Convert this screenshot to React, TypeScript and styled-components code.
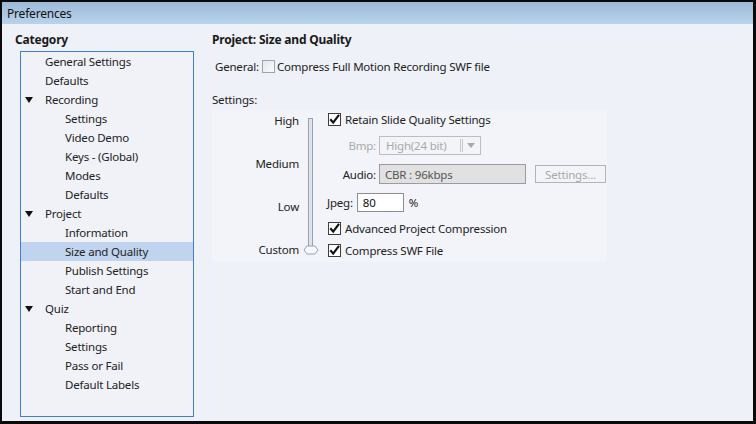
import React from "react";
import styled, { createGlobalStyle } from "styled-components";

const Global = createGlobalStyle`
  html, body { margin: 0; padding: 0; background: #000; }
  body { font-family: "Noto Sans", "DejaVu Sans", sans-serif; font-size: 11.5px; letter-spacing: -0.2px; color: #222; }
  * { box-sizing: border-box; }
`;

const Window = styled.div`
  width: 756px;
  height: 424px;
  border-top: 2px solid #0a0a0a;
  border-left: 2px solid #0a0a0a;
  border-right: 3px solid #0a0a0a;
  border-bottom: 3px solid #0a0a0a;
  display: flex;
  flex-direction: column;
  background: #eef1f7;
`;

const TitleBar = styled.div`
  height: 22px;
  flex: none;
  background: linear-gradient(#9db9d7, #b9d3eb);
  display: flex;
  align-items: center;
  padding-left: 5px;
  font-size: 12px;
  color: #111;
`;

const Body = styled.div`
  flex: 1;
  display: flex;
  min-height: 0;
`;

const LeftCol = styled.div`
  width: 193px;
  flex: none;
  padding: 8px 0 0 13px;
  display: flex;
  flex-direction: column;
`;

const Heading = styled.div`
  font-weight: bold;
  font-size: 12px;
  line-height: 16px;
  height: 16px;
  color: #1a1a1a;
`;

const Tree = styled.div`
  margin: 3px 0 0 5px;
  width: 174px;
  height: 366px;
  border: 1px solid #3c7fd9;
  background: #f0f2f8;
`;

const Row = styled.div<{ $level: number; $selected?: boolean }>`
  height: 19px;
  display: flex;
  align-items: center;
  position: relative;
  padding-left: ${(p) => (p.$level === 0 ? 24 : 44)}px;
  background: ${(p) => (p.$selected ? "#c1d4ef" : "transparent")};
  color: #222;
`;

const Arrow = styled.span`
  position: absolute;
  left: 4px;
  top: 7px;
  width: 0;
  height: 0;
  border-left: 4px solid transparent;
  border-right: 4px solid transparent;
  border-top: 6px solid #111;
`;

const RightCol = styled.div`
  flex: 1;
  padding: 8px 0 0 17px;
  display: flex;
  flex-direction: column;
`;

const GeneralRow = styled.div`
  margin-top: 10px;
  height: 16px;
  display: flex;
  align-items: center;
  padding-left: 3px;
`;

const Label = styled.span<{ $disabled?: boolean }>`
  color: ${(p) => (p.$disabled ? "#a9a9a9" : "#222")};
  white-space: nowrap;
`;

const Gap = styled.span<{ $w: number }>`
  width: ${(p) => p.$w}px;
  flex: none;
`;

const SettingsLabel = styled.div`
  margin-top: 18px;
  height: 16px;
  line-height: 16px;
`;

const Panel = styled.div`
  margin-top: 2px;
  width: 395px;
  height: 152px;
  background: #f2f4f9;
  display: grid;
  grid-template-columns: 87px 29px 1fr;
`;

const Levels = styled.div`
  display: flex;
  flex-direction: column;
  justify-content: space-between;
  align-items: flex-end;
  padding: 3px 0 4px;
`;

const Level = styled.div`
  line-height: 16px;
`;

const SliderCell = styled.div`
  position: relative;
`;

const Track = styled.div`
  position: absolute;
  left: 9px;
  top: 8px;
  width: 5px;
  height: 134px;
  border: 1px solid #9aa0b0;
  background: #dfe3ec;
`;

const Thumb = styled.svg`
  position: absolute;
  left: 4px;
  top: 134px;
`;

const Options = styled.div`
  display: flex;
  flex-direction: column;
  padding-top: 1px;
`;

const CheckRow = styled.div<{ $mt: number }>`
  margin-top: ${(p) => p.$mt}px;
  height: 16px;
  display: flex;
  align-items: center;
  gap: 2px;
`;

const FieldRow = styled.div<{ $mt: number; $h: number }>`
  margin-top: ${(p) => p.$mt}px;
  height: ${(p) => p.$h}px;
  display: flex;
  align-items: center;
`;

const SubLabel = styled.span<{ $disabled?: boolean }>`
  width: 48px;
  text-align: right;
  margin-right: 3px;
  color: ${(p) => (p.$disabled ? "#a9a9a9" : "#222")};
`;

const Dropdown = styled.div`
  width: 102px;
  height: 19px;
  border: 1px solid #bdbdbd;
  background: #f3f4f7;
  display: flex;
  align-items: center;
  color: #a9a9a9;
  padding-left: 6px;
`;

const DropText = styled.span`
  flex: 1;
`;

const DropSep = styled.span`
  width: 3px;
  height: 13px;
  border-left: 1px solid #c8c8c8;
  border-right: 1px solid #c8c8c8;
  margin-right: 4px;
`;

const DropArrow = styled.span`
  width: 0;
  height: 0;
  border-left: 4px solid transparent;
  border-right: 4px solid transparent;
  border-top: 5px solid #a9a9a9;
  margin-right: 5px;
`;

const TextBox = styled.div<{ $w: number; $disabled?: boolean }>`
  width: ${(p) => p.$w}px;
  height: 100%;
  border: 1px solid ${(p) => (p.$disabled ? "#9c9c9c" : "#8e8e8e")};
  background: ${(p) => (p.$disabled ? "#e1e1e1" : "#fff")};
  display: flex;
  align-items: center;
  padding-left: 5px;
  color: ${(p) => (p.$disabled ? "#555" : "#111")};
`;

const Button = styled.div`
  margin-left: 9px;
  width: 71px;
  height: 18px;
  border: 1px solid #b4b4b4;
  background: #f3f4f7;
  color: #a9a9a9;
  display: flex;
  align-items: center;
  justify-content: center;
`;

const JpegLabel = styled.span`
  margin-left: -1px;
  margin-right: 4px;
`;

const Percent = styled.span`
  margin-left: 5px;
`;

const Box = styled.span<{ $checked?: boolean }>`
  width: 13px;
  height: 13px;
  flex: none;
  border: 1px solid ${(p) => (p.$checked ? "#3d3d3d" : "#9ea4ae")};
  background: ${(p) => (p.$checked ? "#fff" : "linear-gradient(135deg,#e4e6ea,#fbfbfc)")};
  display: flex;
  align-items: center;
  justify-content: center;
  margin-right: 2px;
`;

const Check = ({ checked }: { checked?: boolean }) => (
  <Box $checked={checked}>
    {checked && (
      <svg width="11" height="11" viewBox="0 0 11 11">
        <path d="M1.3 5.2 L4.2 8.6 L10 0.8" fill="none" stroke="#111" strokeWidth="2.2" />
      </svg>
    )}
  </Box>
);

type Item = { t: string; l: number; arrow?: boolean; sel?: boolean };
const items: Item[] = [
  { t: "General Settings", l: 0 },
  { t: "Defaults", l: 0 },
  { t: "Recording", l: 0, arrow: true },
  { t: "Settings", l: 1 },
  { t: "Video Demo", l: 1 },
  { t: "Keys - (Global)", l: 1 },
  { t: "Modes", l: 1 },
  { t: "Defaults", l: 1 },
  { t: "Project", l: 0, arrow: true },
  { t: "Information", l: 1 },
  { t: "Size and Quality", l: 1, sel: true },
  { t: "Publish Settings", l: 1 },
  { t: "Start and End", l: 1 },
  { t: "Quiz", l: 0, arrow: true },
  { t: "Reporting", l: 1 },
  { t: "Settings", l: 1 },
  { t: "Pass or Fail", l: 1 },
  { t: "Default Labels", l: 1 },
];

export default function App() {
  return (
    <>
      <Global />
      <Window>
        <TitleBar>Preferences</TitleBar>
        <Body>
          <LeftCol>
            <Heading>Category</Heading>
            <Tree>
              {items.map((it, i) => (
                <Row key={i} $level={it.l} $selected={it.sel}>
                  {it.arrow && <Arrow />}
                  {it.t}
                </Row>
              ))}
            </Tree>
          </LeftCol>
          <RightCol>
            <Heading>Project: Size and Quality</Heading>
            <GeneralRow>
              <Label>General:</Label>
              <Gap $w={3} />
              <Check />
              <Label>Compress Full Motion Recording SWF file</Label>
            </GeneralRow>
            <SettingsLabel>Settings:</SettingsLabel>
            <Panel>
              <Levels>
                <Level>High</Level>
                <Level>Medium</Level>
                <Level>Low</Level>
                <Level>Custom</Level>
              </Levels>
              <SliderCell>
                <Track />
                <Thumb width="16" height="12" viewBox="0 0 16 12">
                  <path d="M1 6 L4 2 H12 L15 6 L12 10 H4 Z" fill="#f7f8fb" stroke="#9aa0b0" />
                </Thumb>
              </SliderCell>
              <Options>
                <CheckRow $mt={0}>
                  <Check checked />
                  <Label>Retain Slide Quality Settings</Label>
                </CheckRow>
                <FieldRow $mt={9} $h={19}>
                  <SubLabel $disabled>Bmp:</SubLabel>
                  <Dropdown>
                    <DropText>High(24 bit)</DropText>
                    <DropSep />
                    <DropArrow />
                  </Dropdown>
                </FieldRow>
                <FieldRow $mt={9} $h={20}>
                  <SubLabel>Audio:</SubLabel>
                  <TextBox $w={147} $disabled>CBR : 96kbps</TextBox>
                  <Button>Settings...</Button>
                </FieldRow>
                <FieldRow $mt={9} $h={19}>
                  <JpegLabel>Jpeg:</JpegLabel>
                  <TextBox $w={47}>80</TextBox>
                  <Percent>%</Percent>
                </FieldRow>
                <CheckRow $mt={8}>
                  <Check checked />
                  <Label>Advanced Project Compression</Label>
                </CheckRow>
                <CheckRow $mt={6}>
                  <Check checked />
                  <Label>Compress SWF File</Label>
                </CheckRow>
              </Options>
            </Panel>
          </RightCol>
        </Body>
      </Window>
    </>
  );
}
